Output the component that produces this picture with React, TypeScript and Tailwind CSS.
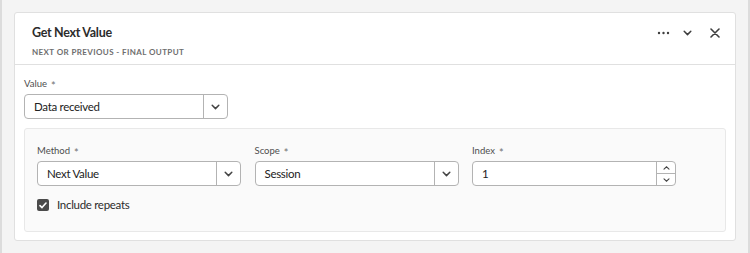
import React from "react";

const font = { fontFamily: "Lato, 'Noto Sans', sans-serif" };

function Chevron({ className = "" }: { className?: string }) {
  return (
    <svg width="9" height="6" viewBox="0 0 9 6" className={className}>
      <path d="M1.2 1.3l3.3 3.3 3.3-3.3" fill="none" stroke="currentColor" strokeWidth="1.5" strokeLinecap="round" strokeLinejoin="round" />
    </svg>
  );
}

function Label({ text }: { text: string }) {
  return (
    <div className="flex items-center gap-[4px] h-[14px] mb-[3px] text-[9.5px] text-[#4e4e4e]">
      <span>{text}</span>
      <span className="text-[11px] leading-none text-[#707070] mt-[3px]">*</span>
    </div>
  );
}

function Select({ value }: { value: string }) {
  return (
    <div className="flex h-[25px] w-[204px] rounded-[4px] border border-[#b3b3b3] bg-white">
      <div className="flex-1 flex items-center pl-[9px] text-[11.5px] tracking-[-0.3px] text-[#222]">{value}</div>
      <div className="w-[24px] border-l border-[#b3b3b3] flex items-center justify-center text-[#444]">
        <Chevron />
      </div>
    </div>
  );
}

export default function App() {
  return (
    <div
      style={font}
      className="w-[750px] h-[253px] bg-[#f4f4f4] border-l-2 border-r-2 border-[#dcdcdc] pl-[12px] pr-[12px] pt-[12px]"
    >
      <div className="w-[722px] h-[229px] bg-white border border-[#e0e0e0] rounded-[3px]">
        {/* header */}
        <div className="h-[52px] border-b border-[#e0e0e0] flex items-start justify-between pl-[17px] pr-[15px]">
          <div className="pt-[12px]">
            <div className="text-[12.5px] font-bold tracking-[-0.3px] text-[#2c2c2c] leading-[16px]">Get Next Value</div>
            <div className="mt-[5px] text-[8px] font-bold tracking-[0.4px] text-[#6e6e6e] leading-[12px]">
              NEXT OR PREVIOUS - FINAL OUTPUT
            </div>
          </div>
          <div className="flex items-center pt-[15px] text-[#3e3e3e]">
            <svg width="13" height="4" viewBox="0 0 13 4">
              <circle cx="2" cy="2" r="1.2" fill="currentColor" />
              <circle cx="6.5" cy="2" r="1.2" fill="currentColor" />
              <circle cx="11" cy="2" r="1.2" fill="currentColor" />
            </svg>
            <Chevron className="ml-[13px]" />
            <svg width="10" height="10" viewBox="0 0 10 10" className="ml-[18px]">
              <path d="M1 1l8 8M9 1l-8 8" stroke="currentColor" strokeWidth="1.6" strokeLinecap="round" />
            </svg>
          </div>
        </div>

        {/* body */}
        <div className="px-[9px] pt-[12px]">
          <Label text="Value" />
          <Select value="Data received" />

          <div className="mt-[9px] h-[104px] bg-[#fafafa] border border-[#e8e8e8] rounded-[3px] px-[12px] pt-[15px]">
            <div className="flex gap-[13.5px]">
              <div>
                <Label text="Method" />
                <Select value="Next Value" />
              </div>
              <div>
                <Label text="Scope" />
                <Select value="Session" />
              </div>
              <div>
                <Label text="Index" />
                <div className="flex h-[25px] w-[204px] rounded-[4px] border border-[#b3b3b3] bg-white">
                  <div className="flex-1 flex items-center pl-[9px] text-[11.5px] text-[#222]">1</div>
                  <div className="w-[19px] border-l border-[#b3b3b3] flex flex-col text-[#444]">
                    <div className="flex-1 flex items-center justify-center border-b border-[#b3b3b3]">
                      <svg width="7" height="4" viewBox="0 0 7 4">
                        <path d="M1 3.2l2.5-2.4 2.5 2.4" fill="none" stroke="currentColor" strokeWidth="1.1" strokeLinecap="round" />
                      </svg>
                    </div>
                    <div className="flex-1 flex items-center justify-center">
                      <svg width="7" height="4" viewBox="0 0 7 4">
                        <path d="M1 0.8l2.5 2.4 2.5-2.4" fill="none" stroke="currentColor" strokeWidth="1.1" strokeLinecap="round" />
                      </svg>
                    </div>
                  </div>
                </div>
              </div>
            </div>
            <div className="flex items-center gap-[8px] mt-[11px] h-[16px]">
              <div className="w-[12px] h-[12px] rounded-[2px] bg-[#4b4b4b] flex items-center justify-center">
                <svg width="8" height="7" viewBox="0 0 8 7">
                  <path d="M1 3.6l2 2 4-4.6" fill="none" stroke="white" strokeWidth="1.6" strokeLinecap="round" strokeLinejoin="round" />
                </svg>
              </div>
              <span className="text-[11.5px] tracking-[-0.3px] text-[#2c2c2c]">Include repeats</span>
            </div>
          </div>
        </div>
      </div>
    </div>
  );
}
